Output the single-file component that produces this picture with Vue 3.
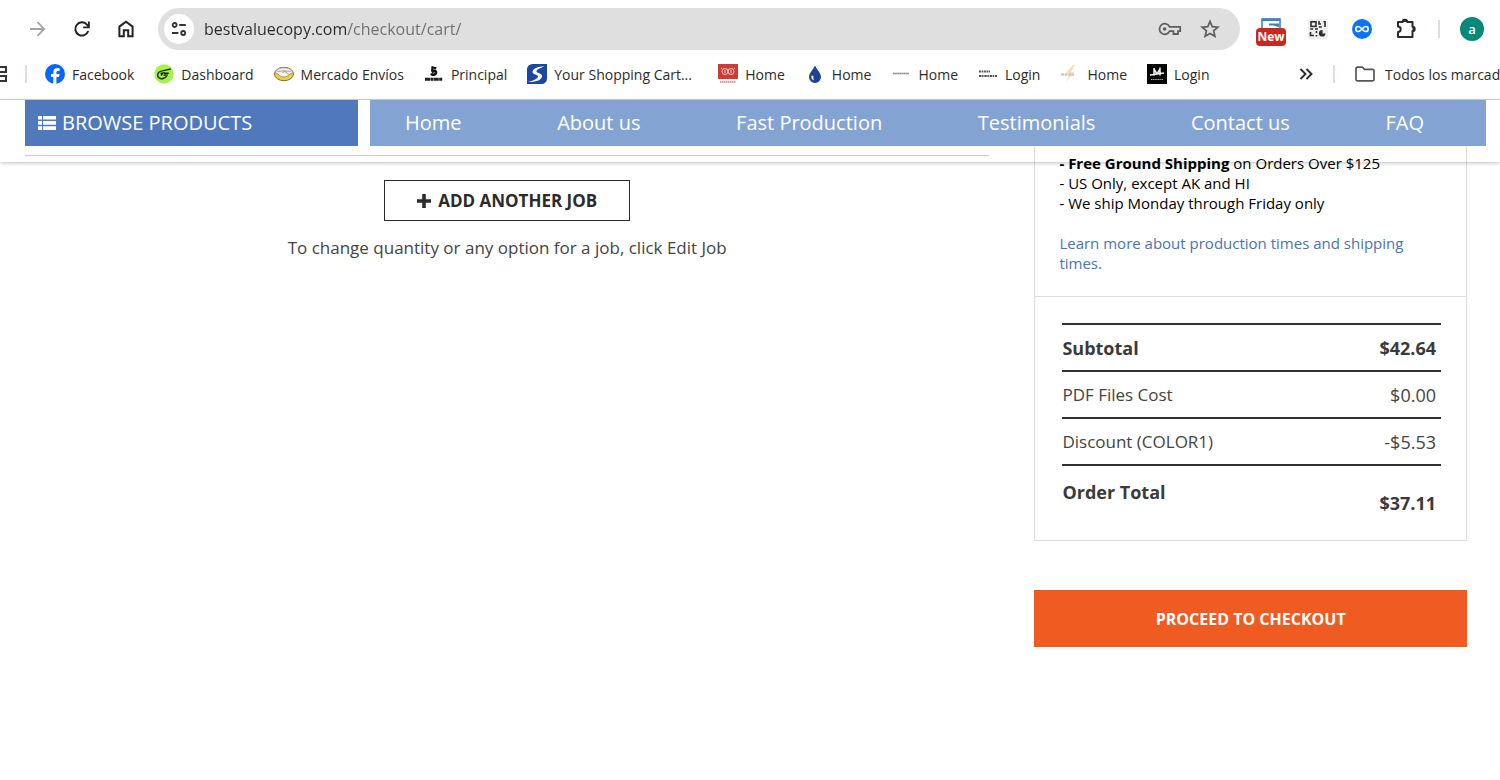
<template>
  <div class="page">
    <header class="browser">
      <div class="toolbar">
        <div class="nav-buttons">
          <button class="icon-btn" aria-label="Forward">
            <svg width="20" height="20" viewBox="0 0 20 20" fill="none" stroke="#a3a3a3" stroke-width="1.8">
              <path d="M2 10H16M9.500 3.200L16.200 10l-6.700 6.800" />
            </svg>
          </button>
          <button class="icon-btn" aria-label="Reload">
            <svg width="20" height="20" viewBox="0 0 20 20">
              <path d="M16.2 12a6.600 6.600 0 1 1-1.500-6.600L17 7.700" fill="none" stroke="#222" stroke-width="2" />
              <path d="M17.800 2.600v6.600h-6.600V7.400H16V2.600z" fill="#222" />
            </svg>
          </button>
          <button class="icon-btn" aria-label="Home">
            <svg width="20" height="20" viewBox="0 0 20 20" fill="none" stroke="#222" stroke-width="2">
              <path d="M3.400 17.200V7.600L10 2.700l6.600 4.900v9.600h-4.400v-6H7.800v6z" />
            </svg>
          </button>
        </div>

        <div class="address">
          <button class="site-info" aria-label="Site information">
            <svg width="18" height="18" viewBox="0 0 18 18" fill="none" stroke="#333" stroke-width="1.8">
              <circle cx="4.600" cy="5" r="2" />
              <path d="M9.200 5h6.600M2 13h6.400" />
              <circle cx="13.200" cy="13" r="2" />
            </svg>
          </button>
          <input v-model="url" class="url" type="text" aria-label="Address" spellcheck="false" />
          <button class="icon-btn" aria-label="Passwords">
            <svg width="24" height="16" viewBox="0 0 24 16" fill="none" stroke="#5f5f5f" stroke-width="1.8">
              <path d="M11.600 5.800A5.300 5.300 0 1 0 11.600 10.200H15.400V13H20V10.200H22.200V5.800z" />
              <circle cx="6.600" cy="8" r="1.800" fill="#5f5f5f" stroke="none" />
            </svg>
          </button>
          <button class="icon-btn" aria-label="Bookmark this page">
            <svg width="20" height="20" viewBox="0 0 20 20" fill="none" stroke="#5f5f5f" stroke-width="1.7">
              <path d="M10 2.400l2.200 5.200 5.700.5-4.300 3.700 1.300 5.500-4.900-2.900-4.900 2.900 1.300-5.500L2.100 8.100l5.700-.5z" />
            </svg>
          </button>
        </div>

        <div class="extensions">
          <button class="ext-new" aria-label="New extension">
            <svg width="20" height="16" viewBox="0 0 20 16">
              <path d="M1 16V1h18v15" fill="#fff" stroke="#3d83bd" stroke-width="1.6" />
              <path d="M1 .500h18v2.500H1z" fill="#3d83bd" />
              <path d="M8 5.500h10v3.500c-3-1.200-6-1.800-10-1.500z" fill="#3d83bd" />
            </svg>
            <span class="new-tag">New</span>
          </button>
          <button class="icon-btn" aria-label="QR code">
            <svg width="20" height="20" viewBox="0 0 20 20">
              <rect width="20" height="20" rx="2" fill="#efefef" />
              <g fill="none" stroke="#2d2d2d" stroke-width="1.6">
                <rect x="3" y="2.800" width="5" height="4.600" />
                <path d="M11 2v3h2M15.500 2.800H17V8M10.800 8h3M2.200 10h3M7 10h3M2.500 13v3.500H6M8.500 12v2M8.500 16v1.500" />
              </g>
              <path d="M14.500 11v3.500h3a3.300 3.300 0 1 1-3-3.500z" fill="#2d2d2d" />
            </svg>
          </button>
          <button class="icon-btn" aria-label="Infinity extension">
            <svg width="20" height="20" viewBox="0 0 20 20">
              <circle cx="10" cy="10" r="10" fill="#0a73fb" />
              <path d="M10 10C8.600 8.400 7.700 7.500 6.300 7.500a2.500 2.500 0 0 0 0 5c1.400 0 2.300-.900 3.700-2.500s2.300-2.500 3.700-2.500a2.500 2.500 0 0 1 0 5c-1.400 0-2.300-.900-3.700-2.500z" fill="none" stroke="#fff" stroke-width="1.700" />
            </svg>
          </button>
          <button class="icon-btn" aria-label="Extensions">
            <svg width="22" height="22" viewBox="0 0 22 22">
              <path d="M3 4h4.600a2.300 2.300 0 0 1 4.600 0H17.500v4.700a2.200 2.200 0 0 1 0 4.400V19H3v-5a2.700 2.700 0 0 0 0-5.400z" fill="none" stroke="#2b2b2b" stroke-width="2" stroke-linejoin="round" />
              <path d="M7.700 4a2.200 2.200 0 0 1 4.400 0zM17.500 8.700a2.200 2.200 0 0 1 0 4.400z" fill="#2b2b2b" />
            </svg>
          </button>
          <span class="bar"></span>
          <button class="avatar" aria-label="Profile">a</button>
        </div>
      </div>

      <nav class="bookmarks" aria-label="Bookmarks">
        <button class="apps" aria-label="Apps">
          <svg width="8" height="18" viewBox="0 0 8 18" fill="none" stroke="#333" stroke-width="2">
            <path d="M0 2h6v5H0M0 11h6v5H0" />
          </svg>
        </button>
        <span class="bar"></span>
        <div class="bookmark-list">
          <a v-for="(item, index) in bookmarks" :key="index" href="#" class="bookmark">
            <svg width="20" height="20" viewBox="0 0 20 20">
              <template v-if="item.icon === 'facebook'">
                <circle cx="10" cy="10" r="10" fill="#0866ff" />
                <path d="M8.300 20v-6.900H6v-3h2.300V8.700c0-3.300 1.600-4.700 4.600-4.700.6 0 1.200.100 1.700.200v2.700h-1.300c-1.500 0-1.900.600-1.900 1.900v1.300h3.100l-.500 3h-2.600V20z" fill="#fff" />
              </template>
              <template v-else-if="item.icon === 'dashboard'">
                <circle cx="10" cy="10" r="9.700" fill="#a4f24a" />
                <path d="M16.800 5L9.500 6.600C5.800 7 3.500 9 3.700 11.600c.3 2.400 2.800 3.600 5.300 2.900 1.500-.4 3-1.200 3.800-2.300M6.500 9.500l2.500-.5-2 2.500M10 9.200h4.800M9.500 11.200l4.300-.3" fill="none" stroke="#18280c" stroke-width="1.400" />
              </template>
              <template v-else-if="item.icon === 'mercado'">
                <ellipse cx="10" cy="10" rx="9.500" ry="6.700" fill="#f3cf3c" stroke="#77704a" />
                <path d="M1 8.500c1-3.300 5-4.700 9-4.700s8 1.400 9 4.700l-3 1.500c-2 2.200-4 3-6 3s-4.500-.8-6-3z" fill="#f4f4ee" stroke="#8b8878" stroke-width=".8" />
                <path d="M2.500 7c3 1 4.500 0 7-.3 3 .3 5 1 8 .3M8 8.500l3-1 4 3" fill="none" stroke="#8b8878" stroke-width=".8" />
              </template>
              <template v-else-if="item.icon === 'principal'">
                <path d="M7.500 2l5.500 1.500-1.800 2c3 .8 2.800 5.200-.2 6.200-2 .8-4.800.2-4.800-2l2-.7L7 7z" fill="#111" />
                <path d="M8.800 9.300l2-.8M9.200 5l1.500.500" stroke="#fff" stroke-width=".7" />
                <path d="M1 15.300h17.500" stroke="#222" stroke-width="3" stroke-dasharray="5 .4 3 .4" />
              </template>
              <template v-else-if="item.icon === 'cart'">
                <path d="M5.500 0H20v14.500a5.500 5.500 0 0 1-5.500 5.500H0V5.500A5.500 5.500 0 0 1 5.500 0z" fill="#1c48a0" />
                <path d="M17.500 2.500C11 2.500 5.500 4.500 5.500 8c0 2.500 5.500 2.500 5.500 4.500 0 2.200-4.500 4.200-10 5.500 8 .300 14-2 14-6 0-3-5.500-2.800-5.500-4.800 0-1.600 3.500-3.200 8-4.700z" fill="#fff" />
              </template>
              <template v-else-if="item.icon === 'red'">
                <path d="M0 0h20v15H0z" fill="#cf3a34" />
                <g fill="none" stroke="#f5c9c6">
                  <circle cx="7" cy="7.500" r="3" />
                  <circle cx="13" cy="7.500" r="3" />
                  <path d="M7 6v3M13 6v3M4 5l-1-1M16 5l1-1" />
                </g>
                <path d="M2 18h16" stroke="#d97b77" stroke-width="1.600" stroke-dasharray="1.500 .5" />
              </template>
              <template v-else-if="item.icon === 'drop'">
                <path d="M10 1.500c2 4.500 6 7.500 6 11.500a6 6 0 0 1-12 0c0-4 4-7 6-11.500z" fill="#1d4394" />
                <path d="M6.500 11.500c-.700 2.500.600 4.500 2.700 5-1-1.500-1-3-.7-4.500z" fill="#fff" />
              </template>
              <template v-else-if="item.icon === 'dash'">
                <path d="M2 9.500h16" stroke="#c5c5c5" stroke-width="2" />
                <path d="M2 9.500h16" stroke="#888" stroke-dasharray="1.500 .7" />
              </template>
              <template v-else-if="item.icon === 'words'">
                <path d="M1 7.500h11" stroke="#555" stroke-width="2" stroke-dasharray="2 .7 1.500 .6" />
                <path d="M1 12h18" stroke="#555" stroke-width="2" stroke-dasharray="2.500 .6 1.500 .7" />
              </template>
              <template v-else-if="item.icon === 'spark'">
                <path d="M13 1L6 9h4l-4 9 8-10h-3l4-7z" fill="#f8dcb6" />
                <path d="M1 10.500h13" stroke="#cfc6c0" stroke-width="2.500" stroke-dasharray="3 .5" />
              </template>
              <template v-else>
                <path d="M0 0h20v20H0z" fill="#050505" />
                <path d="M7 4v8M13 3.500v8M7 5l3 5 3-5M3 11l14-2" fill="none" stroke="#eee" stroke-width="1.500" />
                <path d="M4 15.500h12" stroke="#aaa" stroke-dasharray="1.500 .6" />
              </template>
            </svg>
            <span :class="{ long: item.label.endsWith('...') }">{{ item.label }}</span>
          </a>
        </div>
        <button class="icon-btn more" aria-label="More bookmarks">
          <svg width="14" height="12" viewBox="0 0 14 12" fill="none" stroke="#2b2b2b" stroke-width="1.900">
            <path d="M1.500 1l5 5-5 5M7.500 1l5 5-5 5" />
          </svg>
        </button>
        <span class="bar"></span>
        <a href="#" class="all-bookmarks">
          <svg width="20" height="16" viewBox="0 0 20 16" fill="none" stroke="#555" stroke-width="1.700" stroke-linejoin="round">
            <path d="M1 13.500v-11A1.300 1.300 0 0 1 2.300 1.200H7.500L9.500 3.400h8.200A1.300 1.300 0 0 1 19 4.700v8.800a1.300 1.300 0 0 1-1.300 1.300H2.300A1.300 1.300 0 0 1 1 13.500z" />
          </svg>
          <span>Todos los marcadores</span>
        </a>
      </nav>
    </header>

    <div class="site">
      <div class="site-header">
        <button class="browse">
          <svg width="18" height="14" viewBox="0 0 18 14" fill="#fff">
            <path d="M0 0h4v3.600H0zM5 0h13v3.600H5zM0 5h4v3.800H0zM5 5h13v3.800H5zM0 10.200h4V14H0zM5 10.200h13V14H5z" />
          </svg>
          <span>BROWSE PRODUCTS</span>
        </button>
        <nav class="menu" aria-label="Main">
          <a v-for="item in menu" :key="item" href="#">{{ item }}</a>
        </nav>
      </div>

      <main class="content">
        <section class="jobs">
          <button class="add-job">
            <svg width="14" height="14" viewBox="0 0 14 14" fill="#2b2b2b">
              <path d="M5.200 0h3.600v5.200H14v3.600H8.800V14H5.200V8.800H0V5.200h5.200z" />
            </svg>
            <span>ADD ANOTHER JOB</span>
          </button>
          <p>To change quantity or any option for a job, click Edit Job</p>
        </section>

        <aside class="summary">
          <div class="card">
            <div class="shipping">
              <p><b>- Free Ground Shipping</b> on Orders Over $125</p>
              <p>- US Only, except AK and HI</p>
              <p>- We ship Monday through Friday only</p>
              <a href="#">Learn more about production times and shipping times.</a>
            </div>
            <div class="totals">
              <table>
                <tbody>
                  <tr v-for="row in totals" :key="row.label" :class="row.type">
                    <th scope="row">{{ row.label }}</th>
                    <td>{{ row.amount }}</td>
                  </tr>
                </tbody>
              </table>
            </div>
          </div>
          <button class="checkout">PROCEED TO CHECKOUT</button>
        </aside>
      </main>
    </div>
  </div>
</template>

<script setup>
import { ref } from 'vue'

const url = ref('bestvaluecopy.com/checkout/cart/')

const bookmarks = [
  { label: 'Facebook', icon: 'facebook' },
  { label: 'Dashboard', icon: 'dashboard' },
  { label: 'Mercado Envíos', icon: 'mercado' },
  { label: 'Principal', icon: 'principal' },
  { label: 'Your Shopping Cart...', icon: 'cart' },
  { label: 'Home', icon: 'red' },
  { label: 'Home', icon: 'drop' },
  { label: 'Home', icon: 'dash' },
  { label: 'Login', icon: 'words' },
  { label: 'Home', icon: 'spark' },
  { label: 'Login', icon: 'black' }
]

const menu = ['Home', 'About us', 'Fast Production', 'Testimonials', 'Contact us', 'FAQ']

const totals = [
  { label: 'Subtotal', amount: '$42.64', type: 'strong' },
  { label: 'PDF Files Cost', amount: '$0.00', type: '' },
  { label: 'Discount (COLOR1)', amount: '-$5.53', type: '' },
  { label: 'Order Total', amount: '$37.11', type: 'strong grand' }
]
</script>

<style>
body {
  margin: 0;
  background: #fff;
}
</style>

<style scoped>
.page {
  font-family: "Open Sans", "Noto Sans", sans-serif;
  color: #444;
  overflow: hidden;
}

.page * {
  box-sizing: border-box;
}

button {
  font-family: inherit;
  border: none;
  background: none;
  padding: 0;
  cursor: pointer;
}

a {
  text-decoration: none;
}

p {
  margin: 0;
}

svg {
  display: block;
  flex: none;
}

.browser {
  border-bottom: 1px solid #d3d5db;
}

.toolbar {
  display: flex;
  align-items: center;
  height: 58px;
  padding: 0 16px 0 28px;
}

.icon-btn {
  display: flex;
  align-items: center;
  justify-content: center;
  flex: none;
}

.nav-buttons {
  display: flex;
  gap: 24px;
  margin-right: 22px;
}

.address {
  display: flex;
  align-items: center;
  flex: 1;
  height: 42px;
  padding: 0 20px 0 6px;
  border-radius: 21px;
  background: #dfdfdf;
}

.site-info {
  display: flex;
  align-items: center;
  justify-content: center;
  width: 30px;
  height: 30px;
  margin-right: 10px;
  border-radius: 50%;
  background: #fff;
}

.url {
  flex: 1;
  min-width: 0;
  padding: 0;
  border: none;
  outline: none;
  font-family: inherit;
  font-size: 16px;
  color: #2b2b2b;
  background: linear-gradient(to right, #2b2b2b 144px, #6e6e6e 144px);
  -webkit-background-clip: text;
  background-clip: text;
  -webkit-text-fill-color: transparent;
}

.address .icon-btn + .icon-btn {
  margin-left: 18px;
}

.extensions {
  display: flex;
  align-items: center;
  gap: 20px;
  margin-left: 16px;
}

.extensions .icon-btn {
  width: 24px;
}

.ext-new {
  display: flex;
  flex-direction: column;
  align-items: center;
  width: 30px;
  padding-top: 6px;
}

.new-tag {
  width: 100%;
  margin-top: -6px;
  border-radius: 4px;
  background: #c9281f;
  color: #fff;
  font-size: 12px;
  font-weight: 700;
  line-height: 18px;
}

.bar {
  flex: none;
  width: 2px;
  height: 18px;
  background: #e2dada;
}

.avatar {
  width: 24px;
  height: 24px;
  border-radius: 50%;
  background: #04897b;
  color: #fff;
  font-size: 13px;
  font-weight: 600;
  line-height: 22px;
}

.bookmarks {
  display: flex;
  align-items: center;
  height: 41px;
  padding-bottom: 9px;
  font-size: 14px;
  white-space: nowrap;
}

.apps {
  margin-right: 17px;
}

.bookmark-list {
  display: flex;
  flex: 1;
  gap: 20px;
  min-width: 0;
  margin-left: 18px;
  overflow: hidden;
}

.bookmark,
.all-bookmarks {
  display: flex;
  align-items: center;
  gap: 7px;
  color: #2b2b2b;
}

.bookmark .long {
  min-width: 144px;
}

.more {
  margin: 0 20px;
}

.all-bookmarks {
  gap: 10px;
  width: 145px;
  margin-left: 20px;
}

.site {
  position: relative;
}

.site::after {
  content: "";
  position: absolute;
  top: 0;
  left: 0;
  right: 0;
  height: 62px;
  box-shadow: 0 1px 4px rgba(0, 0, 0, 0.25);
  pointer-events: none;
}

.site-header {
  display: flex;
  gap: 12px;
  padding: 0 14px 0 25px;
}

.browse {
  display: flex;
  align-items: center;
  gap: 6px;
  flex: 0 0 333px;
  height: 46px;
  padding: 0 13px;
  background: #5079bc;
  color: #fff;
  font-size: 20px;
}

.browse span,
.menu a {
  padding-bottom: 2px;
}

.menu {
  display: flex;
  align-items: center;
  justify-content: space-between;
  flex: 1;
  padding: 0 62px 0 35px;
  background: #83a4d3;
}

.menu a {
  color: #fff;
  font-size: 20px;
}

.content {
  display: flex;
  gap: 45px;
  padding: 0 33px 40px 25px;
}

.jobs {
  display: flex;
  flex-direction: column;
  align-items: center;
  align-self: flex-start;
  flex: 1;
  margin-top: 9px;
  padding-top: 24px;
  border-top: 1px solid #ccc;
}

.add-job {
  display: flex;
  align-items: center;
  gap: 7px;
  height: 41px;
  padding: 0 32px;
  border: 1px solid #2b2b2b;
  color: #2b2b2b;
  font-size: 17px;
  font-weight: 700;
}

.jobs p {
  margin-top: 14px;
  font-size: 17px;
  line-height: 26px;
}

.summary {
  flex: 0 0 30%;
}

.card {
  border: 1px solid #ddd;
  border-top: none;
}

.shipping {
  padding: 7px 24px 23px;
  border-bottom: 1px solid #ddd;
  color: #000;
  font-size: 15px;
  line-height: 20px;
}

.shipping a {
  display: block;
  margin-top: 20px;
  color: #4a73b5;
}

.totals {
  padding: 26px 25px 0 27px;
}

table {
  width: 100%;
  border-collapse: collapse;
  line-height: 24px;
}

tr {
  height: 47px;
  border-top: 2px solid #333;
}

th,
td {
  padding: 0;
  font-weight: 400;
}

th {
  text-align: left;
  font-size: 17px;
}

td {
  padding-right: 5px;
  text-align: right;
  font-size: 18px;
}

.strong th,
.strong td {
  font-size: 18px;
  font-weight: 700;
  color: #3a3a3a;
}

.grand {
  height: 75px;
}

.grand th {
  padding-top: 14px;
  vertical-align: top;
}

.checkout {
  display: block;
  width: 100%;
  height: 57px;
  margin-top: 49px;
  background: #ef5b21;
  color: #fff;
  font-size: 16px;
  font-weight: 700;
}
</style>
